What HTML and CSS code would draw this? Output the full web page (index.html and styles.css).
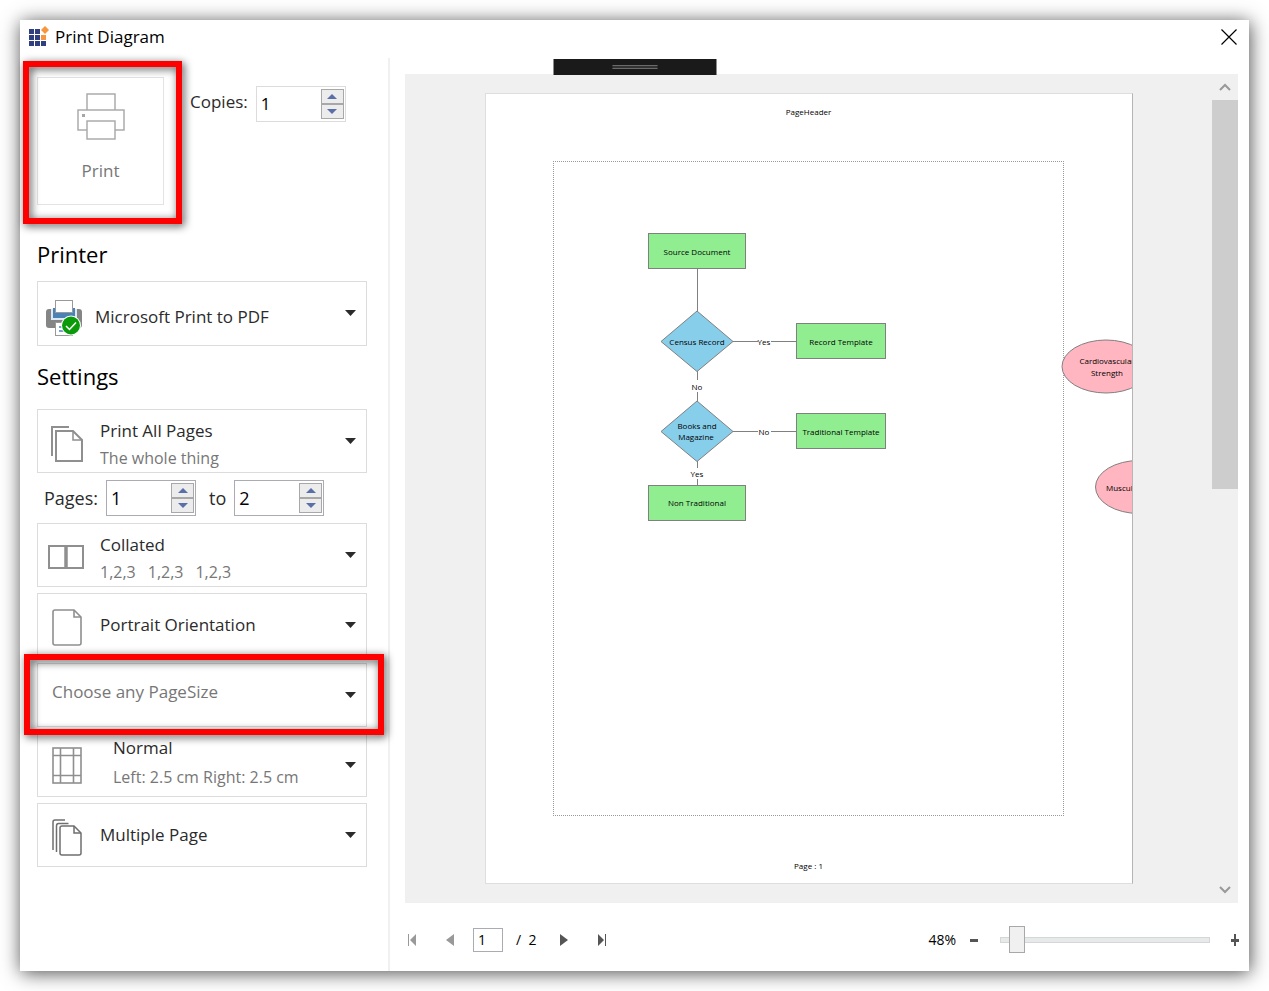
FILE: index.html
```html
<!DOCTYPE html>
<html lang="en">
<head>
    <meta charset="UTF-8">
    <meta name="viewport" content="width=device-width, initial-scale=1.0">
    <title>Print Diagram</title>
    <link rel="stylesheet" href="styles.css">
</head>
<body>
    <div class="window">
        <header class="titlebar">
            <svg class="app-icon" width="20" height="22" viewBox="0 0 20 22">
                <g fill="#2f3f7f">
                    <rect x="0" y="3" width="5" height="5"/><rect x="6" y="3" width="5" height="5"/>
                    <rect x="0" y="9" width="5" height="5"/><rect x="6" y="9" width="5" height="5"/>
                    <rect x="0" y="15" width="5" height="5"/><rect x="6" y="15" width="5" height="5"/><rect x="12" y="15" width="5" height="5"/>
                </g>
                <path d="M16 0l4 4-4 4-4-4z" fill="#f7963a"/>
                <rect x="12" y="9" width="5" height="5" fill="#f7963a"/>
            </svg>
            <h1>Print Diagram</h1>
            <button class="close-btn" type="button" aria-label="Close">
                <svg width="16" height="16" viewBox="0 0 16 16"><path d="M0.500 0.500l15 15M15.500 0.500L0.500 15.500" stroke="#000" stroke-width="1.2"/></svg>
            </button>
        </header>

        <div class="content">
            <form class="sidebar">
                <div class="print-row">
                    <div class="callout">
                        <button class="print-btn" type="button">
                            <svg width="48" height="48" viewBox="0 0 48 48" fill="#fff" stroke="#a6a6a6" stroke-width="1.4">
                                <rect x="10" y="1" width="28" height="18"/>
                                <rect x="1" y="17" width="46" height="20"/>
                                <rect x="10" y="28" width="28" height="18"/>
                                <rect x="5" y="21" width="3" height="3" fill="#a6a6a6" stroke="none"/>
                            </svg>
                            <span>Print</span>
                        </button>
                    </div>
                    <div class="copies">
                        <label for="copies">Copies:</label>
                        <div class="spinner light">
                            <input type="number" id="copies" value="1" min="1">
                            <div class="spin-buttons">
                                <button type="button" aria-label="More copies"><svg width="10" height="5" viewBox="0 0 10 5"><path d="M5 0l5 5H0z"/></svg></button>
                                <button type="button" aria-label="Fewer copies"><svg width="10" height="5" viewBox="0 0 10 5"><path d="M0 0h10L5 5z"/></svg></button>
                            </div>
                        </div>
                    </div>
                </div>

                <h2>Printer</h2>
                <div class="combo printer">
                    <svg class="combo-icon" width="40" height="40" viewBox="0 0 40 40">
                        <rect x="2" y="11" width="36" height="19" rx="3" fill="#858585"/>
                        <path d="M7 11h26v11H7z" fill="#dce8f2"/>
                        <path d="M9 10h22v10H9z" fill="#4a82b8"/>
                        <rect x="11.500" y="2.500" width="17" height="12" fill="#fff" stroke="#999"/>
                        <rect x="11.500" y="24.500" width="17" height="13" fill="#fff" stroke="#999"/>
                        <path d="M15 29h3M15 33h5" stroke="#4a82b8" stroke-width="1.500"/>
                        <circle cx="27" cy="27.500" r="10" fill="#fff"/>
                        <circle cx="27" cy="27.500" r="9" fill="#0a9a0a"/>
                        <path d="M22 28l3.500 3.500 6.500-7" fill="none" stroke="#fff" stroke-width="1.500"/>
                    </svg>
                    <select aria-label="Printer"><option>Microsoft Print to PDF</option></select>
                    <svg class="arrow" width="11" height="6" viewBox="0 0 11 6"><path d="M0 0h11L5.500 6z"/></svg>
                </div>

                <h2>Settings</h2>
                <div class="settings">
                    <div class="combo two-line">
                        <svg class="combo-icon" width="40" height="40" viewBox="0 0 40 40" fill="none" stroke="#8f8f8f" stroke-width="2">
                            <path d="M5 33V4h17"/>
                            <path d="M9 8h17l9 9v21H9z"/>
                            <path d="M26 8v9h9" stroke-width="1.500"/>
                        </svg>
                        <select aria-label="Pages to print"><option>Print All Pages</option></select>
                        <span class="sub">The whole thing</span>
                        <svg class="arrow" width="11" height="6" viewBox="0 0 11 6"><path d="M0 0h11L5.500 6z"/></svg>
                    </div>

                    <div class="pages-row">
                        <label for="fromPage">Pages:</label>
                        <div class="spinner">
                            <input type="number" id="fromPage" value="1" min="1">
                            <div class="spin-buttons">
                                <button type="button" aria-label="Next start page"><svg width="10" height="5" viewBox="0 0 10 5"><path d="M5 0l5 5H0z"/></svg></button>
                                <button type="button" aria-label="Previous start page"><svg width="10" height="5" viewBox="0 0 10 5"><path d="M0 0h10L5 5z"/></svg></button>
                            </div>
                        </div>
                        <label for="toPage" class="to">to</label>
                        <div class="spinner">
                            <input type="number" id="toPage" value="2" min="1">
                            <div class="spin-buttons">
                                <button type="button" aria-label="Next end page"><svg width="10" height="5" viewBox="0 0 10 5"><path d="M5 0l5 5H0z"/></svg></button>
                                <button type="button" aria-label="Previous end page"><svg width="10" height="5" viewBox="0 0 10 5"><path d="M0 0h10L5 5z"/></svg></button>
                            </div>
                        </div>
                    </div>

                    <div class="combo two-line">
                        <svg class="combo-icon" width="40" height="40" viewBox="0 0 40 40" fill="none" stroke="#8f8f8f" stroke-width="2">
                            <rect x="2" y="9" width="34" height="22"/>
                            <path d="M19 9v22" stroke-width="3.500"/>
                        </svg>
                        <select aria-label="Collation"><option>Collated</option></select>
                        <span class="sub sets"><span>1,2,3</span><span>1,2,3</span><span>1,2,3</span></span>
                        <svg class="arrow" width="11" height="6" viewBox="0 0 11 6"><path d="M0 0h11L5.500 6z"/></svg>
                    </div>

                    <div class="combo">
                        <svg class="combo-icon" width="40" height="40" viewBox="0 0 40 40" fill="none" stroke="#8f8f8f" stroke-width="1.600">
                            <path d="M8 3h19l7 7v26q0 2-2 2H8q-2 0-2-2V5q0-2 2-2z"/>
                            <path d="M27 3v7h7"/>
                        </svg>
                        <select aria-label="Orientation"><option>Portrait Orientation</option></select>
                        <svg class="arrow" width="11" height="6" viewBox="0 0 11 6"><path d="M0 0h11L5.500 6z"/></svg>
                    </div>

                    <div class="callout wide">
                        <div class="combo page-size">
                            <select aria-label="Page size"><option>Choose any PageSize</option></select>
                            <svg class="arrow" width="11" height="6" viewBox="0 0 11 6"><path d="M0 0h11L5.500 6z"/></svg>
                        </div>
                    </div>

                    <div class="combo margins">
                        <svg class="combo-icon" width="40" height="40" viewBox="0 0 40 40" fill="none" stroke="#8f8f8f" stroke-width="1.600">
                            <rect x="6" y="1" width="28" height="35"/>
                            <path d="M13.500 1v35M26.500 1v35M6 8.500h28M6 28.500h28"/>
                        </svg>
                        <select aria-label="Margins"><option>Normal</option></select>
                        <span class="sub">Left: 2.5 cm Right: 2.5 cm</span>
                        <svg class="arrow" width="11" height="6" viewBox="0 0 11 6"><path d="M0 0h11L5.500 6z"/></svg>
                    </div>

                    <div class="combo">
                        <svg class="combo-icon" width="40" height="40" viewBox="0 0 40 40" fill="none" stroke="#6f6f6f" stroke-width="1.500">
                            <path d="M6 33V5q0-2 2-2h10"/>
                            <path d="M9.500 35V9q0-2.500 2-2.500h10"/>
                            <path d="M15 9h12l7 7v20q0 2-2 2H15q-2 0-2-2V11q0-2 2-2z"/>
                            <path d="M27 9v7h7"/>
                        </svg>
                        <select aria-label="Pages per sheet"><option>Multiple Page</option></select>
                        <svg class="arrow" width="11" height="6" viewBox="0 0 11 6"><path d="M0 0h11L5.500 6z"/></svg>
                    </div>
                </div>
            </form>

            <main class="preview">
                <div class="viewer">
                    <div class="canvas">
                        <div class="page">
                            <div class="page-header">PageHeader</div>
                            <div class="page-margins"></div>
                            <div class="page-footer">Page : 1</div>
                            <!-- Flow chart, in page coordinates -->
                            <svg class="diagram" width="646" height="789" viewBox="486 94 646 789">
                                <g class="line">
                                    <path d="M697.500 269v42M697.500 371v30M697.500 461v24M733 341.500h63M733 431.500h63"/>
                                </g>
                                <g fill="#fff">
                                    <rect x="758" y="336" width="13" height="12"/>
                                    <rect x="758" y="426" width="13" height="12"/>
                                    <rect x="690" y="380" width="15" height="12"/>
                                    <rect x="690" y="468" width="15" height="11"/>
                                </g>
                                <g class="process">
                                    <rect x="648.500" y="233.500" width="97" height="35"/>
                                    <rect x="796.500" y="323.500" width="89" height="35"/>
                                    <rect x="796.500" y="413.500" width="89" height="35"/>
                                    <rect x="648.500" y="485.500" width="97" height="35"/>
                                </g>
                                <g class="decision">
                                    <path d="M697 311l36 30.500-36 30-36-30z"/>
                                    <path d="M697 401l36 30.500-36 30-36-30z"/>
                                </g>
                                <g class="topic">
                                    <ellipse cx="1106" cy="366.500" rx="44" ry="26.500"/>
                                    <ellipse cx="1139" cy="487" rx="43.500" ry="26.500"/>
                                </g>
                                <g class="node-text">
                                    <text x="697" y="255">Source Document</text>
                                    <text x="697" y="345">Census Record</text>
                                    <text x="697" y="429">Books and</text>
                                    <text x="696" y="440">Magazine</text>
                                    <text x="697" y="506">Non Traditional</text>
                                    <text x="841" y="345">Record Template</text>
                                    <text x="841" y="435">Traditional Template</text>
                                    <text x="764" y="345">Yes</text>
                                    <text x="764" y="435">No</text>
                                    <text x="697" y="390">No</text>
                                    <text x="697" y="477">Yes</text>
                                    <text x="1107" y="364">Cardiovascular</text>
                                    <text x="1107" y="376">Strength</text>
                                    <text x="1106" y="491" class="start">Muscular</text>
                                </g>
                            </svg>
                        </div>
                    </div>
                    <div class="scrollbar">
                        <button type="button" aria-label="Scroll up"><svg width="12" height="8" viewBox="0 0 12 8"><path d="M1 7l5-5 5 5"/></svg></button>
                        <div class="track"><div class="thumb"></div></div>
                        <button type="button" aria-label="Scroll down"><svg width="12" height="8" viewBox="0 0 12 8"><path d="M1 1l5 5 5-5"/></svg></button>
                    </div>
                </div>

                <footer class="statusbar">
                    <div class="pager">
                        <button type="button" aria-label="First page" disabled><svg width="10" height="12" viewBox="0 0 10 12"><path d="M1 0h1v12H1zM9 0v12L3 6z"/></svg></button>
                        <button type="button" aria-label="Previous page" disabled><svg width="10" height="12" viewBox="0 0 10 12"><path d="M9 0v12L1 6z"/></svg></button>
                        <input type="text" id="pageNumber" value="1" aria-label="Page number">
                        <label for="pageNumber">/&nbsp; 2</label>
                        <button type="button" aria-label="Next page"><svg width="10" height="12" viewBox="0 0 10 12"><path d="M1 0v12l8-6z"/></svg></button>
                        <button type="button" aria-label="Last page"><svg width="10" height="12" viewBox="0 0 10 12"><path d="M1 0v12l6-6zM8 0h1v12H8z"/></svg></button>
                    </div>
                    <div class="zoom">
                        <label for="zoomLevel">48%</label>
                        <button type="button" aria-label="Zoom out"><svg width="10" height="12" viewBox="0 0 10 12"><path d="M1 5h8v3H1z"/></svg></button>
                        <input type="range" id="zoomLevel" min="30" max="470" value="48">
                        <button type="button" aria-label="Zoom in"><svg width="10" height="12" viewBox="0 0 10 12"><path d="M1 5h3V0h2v5h3v3H6v4H4V8H1z"/></svg></button>
                    </div>
                </footer>
            </main>
        </div>
        <div class="drag-handle"><span></span></div>
    </div>
</body>
</html>
```

FILE: styles.css
```css
* {
    box-sizing: border-box;
}

body {
    margin: 0;
    padding: 20px;
    background-color: #fff;
    color: #2b2b2b;
    font-family: "Open Sans", "Noto Sans", sans-serif;
    font-size: 17px;
    line-height: 24px;
}

button, input, select {
    font: inherit;
    color: inherit;
}

button {
    display: flex;
    align-items: center;
    justify-content: center;
    margin: 0;
    padding: 0;
    border: none;
    background: none;
    cursor: pointer;
}

h1, h2 {
    margin: 0;
    color: #000;
    font-weight: normal;
}

.window {
    position: relative;
    display: flex;
    flex-direction: column;
    min-height: calc(100vh - 40px);
    background-color: #fff;
    box-shadow: 1px 2px 18px rgba(0, 0, 0, 0.7);
}

/* Title bar */
.titlebar {
    display: flex;
    align-items: center;
    height: 38px;
    padding: 0 12px 4px 9px;
}

.titlebar h1 {
    flex: 1;
    margin-left: 6px;
    font-size: 17px;
}

.drag-handle {
    position: absolute;
    top: 39px;
    left: 50%;
    display: flex;
    align-items: center;
    justify-content: center;
    width: 163px;
    height: 16px;
    transform: translateX(-50%);
    background-color: #1a1a1a;
}

.drag-handle span {
    width: 45px;
    height: 4px;
    border: solid #6a6a6a;
    border-width: 1px 0;
    background-color: #333;
}

.content {
    flex: 1;
    display: flex;
}

/* Left side */
.sidebar {
    flex: none;
    width: 370px;
    padding: 19px 21px 0 17px;
    border-right: 2px solid #f0f0f0;
}

.print-row {
    display: flex;
    gap: 26px;
    height: 160px;
}

.print-btn {
    flex-direction: column;
    gap: 18px;
    width: 127px;
    height: 128px;
    padding-bottom: 6px;
    border: 1px solid #e3e3e3;
    background-color: #fff;
    color: #777;
}

/* Red highlight frame */
.callout {
    position: relative;
}

.callout::after {
    content: "";
    position: absolute;
    z-index: 1;
    inset: -16px -18px 13px -14px;
    border: 6px solid #f00;
    filter: drop-shadow(2px 2px 4px rgba(0, 0, 0, 0.7));
    pointer-events: none;
}

.callout.wide::after {
    inset: -9px -17px -8px -13px;
}

.copies {
    display: flex;
    align-items: center;
    gap: 8px;
    height: 36px;
    margin-top: 9px;
}

.copies label {
    margin-bottom: 4px;
}

.spinner {
    display: flex;
    width: 90px;
    height: 36px;
    padding: 2px 1px 2px 2px;
    border: 1px solid #ababb3;
    background-color: #fff;
}

.spinner.light {
    border-color: #dcdcdc;
}

.spinner input {
    flex: 1;
    min-width: 0;
    padding: 0 2px;
    border: none;
    background: none;
    color: #000;
    appearance: textfield;
}

.spinner input::-webkit-inner-spin-button {
    display: none;
}

.spin-buttons {
    display: flex;
    flex-direction: column;
    width: 23px;
}

.spin-buttons button {
    flex: 1;
    border: 1px solid #a8a8a8;
    background-color: #ececec;
}

.spin-buttons svg {
    fill: #5a6ea8;
}

.sidebar h2 {
    font-size: 22px;
    line-height: 34px;
}

/* Drop-downs */
.combo {
    position: relative;
    height: 64px;
}

.combo select {
    width: 100%;
    height: 100%;
    padding: 0 30px 0 62px;
    border: 1px solid #dcdcdc;
    border-radius: 0;
    background-color: #fff;
    appearance: none;
}

.combo-icon {
    position: absolute;
    top: 14px;
    left: 10px;
    pointer-events: none;
}

.arrow {
    position: absolute;
    top: 29px;
    right: 11px;
    fill: #2b2b2b;
    pointer-events: none;
}

.sub {
    position: absolute;
    top: 37px;
    left: 63px;
    color: #777;
    font-size: 16px;
    pointer-events: none;
}

.combo.printer {
    height: 65px;
    margin: 10px 0 13px;
}

.combo.printer .combo-icon {
    top: 17px;
    left: 7px;
}

.combo.printer select {
    padding-top: 6px;
    padding-left: 57px;
}

.combo.two-line select {
    padding-bottom: 20px;
}

.combo.page-size select {
    padding-bottom: 6px;
    padding-left: 14px;
    color: #777;
}

.combo.margins select {
    padding-bottom: 34px;
    padding-left: 75px;
}

.combo.margins .sub {
    top: 32px;
    left: 76px;
}

.sets {
    display: flex;
    gap: 12px;
}

.settings {
    display: flex;
    flex-direction: column;
    gap: 6px;
    margin-top: 16px;
}

.pages-row {
    display: flex;
    align-items: center;
    gap: 8px;
    margin: 1px 0;
    padding-left: 7px;
    font-size: 18px;
}

.pages-row .to {
    margin-left: 5px;
}

/* Preview */
.preview {
    flex: 1;
    display: flex;
    flex-direction: column;
    min-width: 0;
    padding: 16px 11px 0 15px;
}

.viewer {
    flex: 1;
    display: flex;
    background-color: #f0f0f0;
}

.canvas {
    flex: 1;
    display: flex;
    justify-content: center;
    padding: 19px 0;
    overflow: hidden;
}

.page {
    position: relative;
    display: flex;
    flex-direction: column;
    width: 648px;
    height: 791px;
    border: 1px solid #dedede;
    border-right-color: #b5b5b5;
    background-color: #fff;
    color: #000;
    font-size: 8px;
    line-height: 12px;
    text-align: center;
}

.page-header {
    height: 67px;
    padding-top: 12px;
}

.page-margins {
    flex: 1;
    margin: 0 68px 0 67px;
    border: 1px dotted #999;
}

.page-footer {
    height: 67px;
    padding-top: 44px;
}

.diagram {
    position: absolute;
    top: 0;
    left: 0;
}

.line {
    stroke: #808080;
}

.process {
    fill: #90ee90;
    stroke: #808080;
}

.decision {
    fill: #87ceeb;
    stroke: #808080;
}

.topic {
    fill: #ffb6c1;
    stroke: #808080;
}

.node-text {
    font-size: 8px;
    text-anchor: middle;
}

.node-text .start {
    text-anchor: start;
}

.scrollbar {
    display: flex;
    flex-direction: column;
    width: 26px;
}

.scrollbar button {
    height: 26px;
}

.scrollbar svg {
    fill: none;
    stroke: #999;
    stroke-width: 2;
}

.track {
    flex: 1;
}

.thumb {
    height: 50%;
    background-color: #cdcdcd;
}

/* Bottom bar */
.statusbar {
    display: flex;
    align-items: center;
    justify-content: space-between;
    height: 68px;
    margin-right: -2px;
    color: #000;
    font-size: 14px;
}

.pager {
    display: flex;
    align-items: center;
    padding: 6px 0 0 2px;
}

.statusbar svg {
    fill: #555;
}

.statusbar button:disabled svg {
    fill: #999;
}

.pager button + button {
    margin-left: 28px;
}

.pager input {
    width: 30px;
    height: 24px;
    margin: 0 13px 0 18px;
    padding: 0 4px;
    border: 1px solid #ababb3;
}

.pager label {
    margin-right: 23px;
}

.zoom {
    display: flex;
    align-items: center;
    padding-top: 6px;
}

.zoom label {
    margin-right: 13px;
}

.zoom input {
    width: 210px;
    height: 28px;
    margin: 0 20px 0 21px;
    background: none;
    appearance: none;
}

.zoom input::-webkit-slider-runnable-track {
    height: 6px;
    border: 1px solid #d6d6d6;
    background-color: #e7eaea;
}

.zoom input::-webkit-slider-thumb {
    width: 16px;
    height: 27px;
    margin-top: -12px;
    border: 1px solid #a8a8a8;
    background-color: #f0f0f0;
    appearance: none;
}
```
